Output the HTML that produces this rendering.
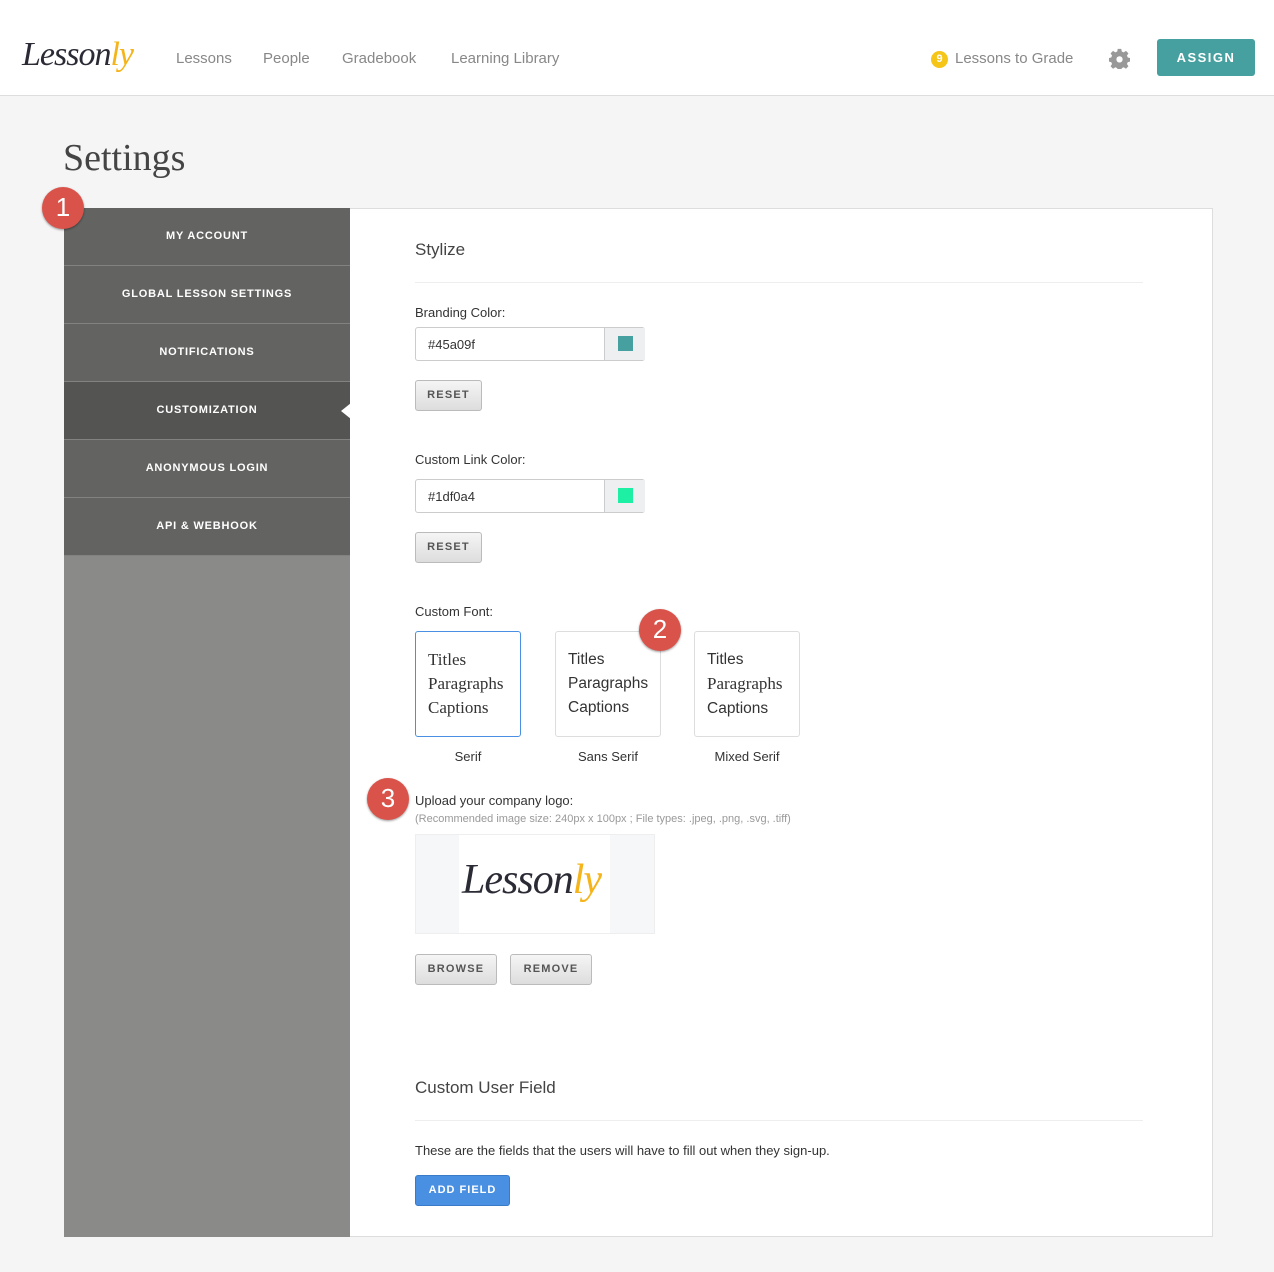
<!DOCTYPE html>
<html><head><meta charset="utf-8"><style>
*{box-sizing:border-box;margin:0;padding:0}
body{width:1274px;height:1272px;background:#f5f5f5;font-family:"Liberation Sans",sans-serif;position:relative;overflow:hidden;color:#333}
.abs{position:absolute}
.hdr{left:0;top:0;width:1274px;height:96px;background:#fff;border-bottom:1px solid #ddd}
.nav{top:50px;font-size:15px;color:#888}
.logo{font-family:"Liberation Serif",serif;font-style:italic;font-size:34px;color:#2b2b36;letter-spacing:-1px}
.logo span{color:#f4b41a}
.assign{left:1157px;top:39px;width:98px;height:37px;background:#45a09f;border-radius:3px;color:#fff;font-weight:bold;font-size:13px;letter-spacing:1.5px;text-align:center;line-height:37px}
.panel{left:64px;top:208px;width:1149px;height:1029px;background:#fff;border:1px solid #ddd}
.side{left:64px;top:208px;width:286px;height:1029px;background:#8a8b89}
.item{position:absolute;left:0;width:286px;height:58px;background:#636462;border-bottom:1px solid #828381;color:#fff;font-size:11px;font-weight:bold;letter-spacing:.8px;text-align:center;line-height:57px}
.badge{width:42px;height:42px;border-radius:50%;background:#d9534a;color:#fff;font-size:26px;text-align:center;line-height:41px;box-shadow:0 1px 2px rgba(0,0,0,.4)}
.lbl{font-size:13px;color:#333}
.h2{font-size:17px;color:#444}
.inp{width:230px;height:34px;border:1px solid #ccc;border-radius:3px;background:#fff}
.inp .t{position:absolute;left:12px;top:9px;font-size:13px}
.inp .sw{position:absolute;left:188px;top:0;width:41px;height:32px;background:#eeeff0;border-left:1px solid #ccc}
.inp .sw i{position:absolute;left:13px;top:8px;width:15px;height:15px}
.btn{height:31px;border:1px solid #bbb;border-radius:3px;background:linear-gradient(#f5f5f5,#ddd);font-size:11px;font-weight:bold;color:#555;letter-spacing:1.2px;text-align:center;line-height:29px}
.font{width:106px;height:106px;border:1px solid #ddd;border-radius:3px;padding:16px 0 0 12px;font-size:16px;line-height:24px;color:#333}
.cap{font-size:13px;text-align:center;width:106px}
</style></head><body>
<div class="abs hdr"></div>
<div class="abs logo" style="left:22px;top:36px">Lesson<span>ly</span></div>
<div class="abs nav" style="left:176px">Lessons</div>
<div class="abs nav" style="left:263px">People</div>
<div class="abs nav" style="left:342px">Gradebook</div>
<div class="abs nav" style="left:451px">Learning Library</div>
<div class="abs" style="left:931px;top:51px;width:17px;height:17px;border-radius:50%;background:#f5c518;color:#fff;font-size:11px;font-weight:bold;text-align:center;line-height:17px">9</div>
<div class="abs nav" style="left:955px">Lessons to Grade</div>
<svg class="abs" style="left:1109px;top:48px" width="21" height="21" viewBox="0 0 24 24"><path fill="#999" d="M10 1h4l.6 3 2.2 1 2.6-1.7 2.8 2.8L20.5 8.7l1 2.2 3 .6v4l-3 .6-1 2.2 1.7 2.6-2.8 2.8-2.6-1.7-2.2 1-.6 3h-4l-.6-3-2.2-1-2.6 1.7-2.8-2.8 1.7-2.6-1-2.2-3-.6v-4l3-.6 1-2.2L1.8 6.1l2.8-2.8L7.2 5l2.2-1z"/><circle cx="12" cy="13" r="3.6" fill="#fff"/></svg>
<div class="abs assign">ASSIGN</div>

<div class="abs" style="left:63px;top:136px;font-family:'Liberation Serif',serif;font-size:38px;color:#444">Settings</div>
<div class="abs panel"></div>
<div class="abs side">
<div class="item" style="top:0">MY ACCOUNT</div>
<div class="item" style="top:58px">GLOBAL LESSON SETTINGS</div>
<div class="item" style="top:116px">NOTIFICATIONS</div>
<div class="item" style="top:174px;background:#545553">CUSTOMIZATION</div>
<div class="item" style="top:232px">ANONYMOUS LOGIN</div>
<div class="item" style="top:290px">API &amp; WEBHOOK</div>
<div class="abs" style="left:277px;top:195px;width:0;height:0;border-top:8px solid transparent;border-bottom:8px solid transparent;border-right:10px solid #fff"></div>
</div>
<div class="abs badge" style="left:42px;top:187px">1</div>

<div class="abs h2" style="left:415px;top:240px">Stylize</div>
<div class="abs" style="left:415px;top:282px;width:728px;height:1px;background:#eee"></div>
<div class="abs lbl" style="left:415px;top:305px">Branding Color:</div>
<div class="abs inp" style="left:415px;top:327px"><span class="t">#45a09f</span><div class="sw"><i style="background:#45a09f"></i></div></div>
<div class="abs btn" style="left:415px;top:380px;width:67px">RESET</div>
<div class="abs lbl" style="left:415px;top:452px">Custom Link Color:</div>
<div class="abs inp" style="left:415px;top:479px"><span class="t">#1df0a4</span><div class="sw"><i style="background:#1df0a4"></i></div></div>
<div class="abs btn" style="left:415px;top:532px;width:67px">RESET</div>
<div class="abs lbl" style="left:415px;top:604px">Custom Font:</div>
<div class="abs font" style="left:415px;top:631px;border-color:#4a90e2;font-family:'Liberation Serif',serif;font-size:17px">Titles<br>Paragraphs<br>Captions</div>
<div class="abs font" style="left:555px;top:631px;font-size:15.5px">Titles<br>Paragraphs<br>Captions</div>
<div class="abs font" style="left:694px;top:631px;font-size:15.5px"><span>Titles</span><br><span style="font-family:'Liberation Serif',serif;font-size:17px">Paragraphs</span><br>Captions</div>
<div class="abs cap" style="left:415px;top:749px">Serif</div>
<div class="abs cap" style="left:555px;top:749px">Sans Serif</div>
<div class="abs cap" style="left:694px;top:749px">Mixed Serif</div>
<div class="abs badge" style="left:639px;top:609px">2</div>
<div class="abs badge" style="left:367px;top:778px">3</div>
<div class="abs lbl" style="left:415px;top:793px">Upload your company logo:</div>
<div class="abs" style="left:415px;top:813px;font-size:11px;color:#999">(Recommended image size: 240px x 100px ; File types: .jpeg, .png, .svg, .tiff)</div>
<div class="abs" style="left:415px;top:834px;width:240px;height:100px;background:#f6f7f9;border:1px solid #eee"></div>
<div class="abs" style="left:459px;top:835px;width:151px;height:98px;background:#fff"></div>
<div class="abs logo" style="left:462px;top:856px;font-size:42px">Lesson<span>ly</span></div>
<div class="abs btn" style="left:415px;top:954px;width:82px">BROWSE</div>
<div class="abs btn" style="left:510px;top:954px;width:82px">REMOVE</div>

<div class="abs h2" style="left:415px;top:1078px">Custom User Field</div>
<div class="abs" style="left:415px;top:1120px;width:728px;height:1px;background:#eee"></div>
<div class="abs lbl" style="left:415px;top:1143px">These are the fields that the users will have to fill out when they sign-up.</div>
<div class="abs" style="left:415px;top:1175px;width:95px;height:31px;background:#4a90e2;border:1px solid #3a7bc8;border-radius:3px;color:#fff;font-size:11px;font-weight:bold;letter-spacing:1px;text-align:center;line-height:29px">ADD FIELD</div>
</body></html>
